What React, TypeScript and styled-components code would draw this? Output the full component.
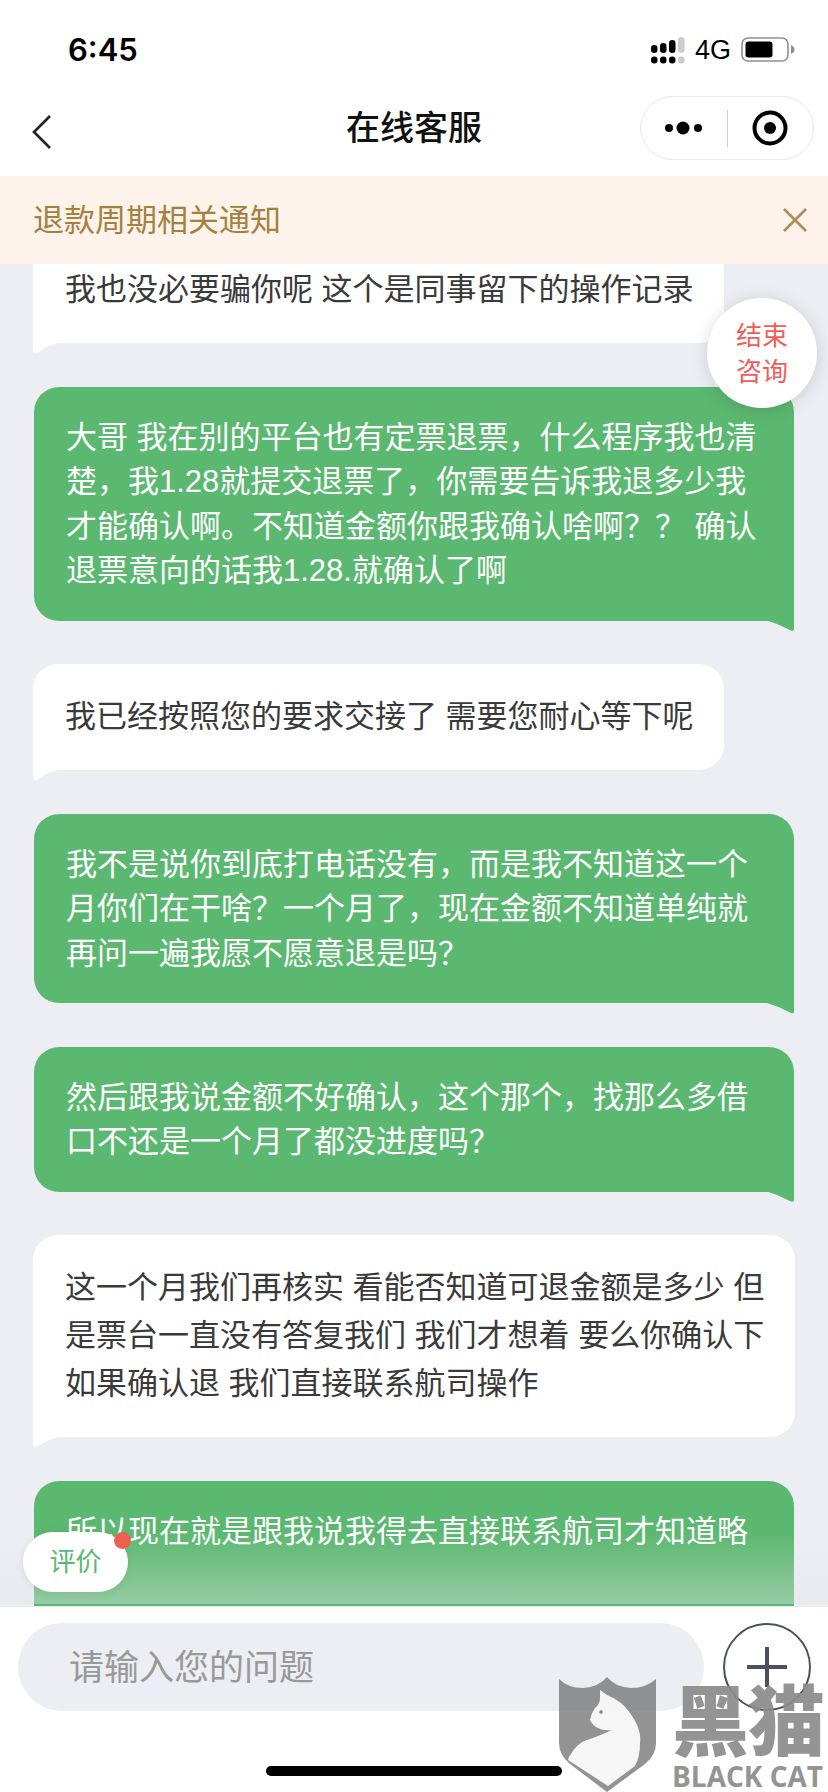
import React from "react";
import styled, { createGlobalStyle } from "styled-components";

const GlobalStyle = createGlobalStyle`
  html, body { margin: 0; padding: 0; background: #fff; }
  * { box-sizing: border-box; }
`;

const FONT = `"Liberation Sans", "Noto Sans CJK SC", sans-serif`;

const Page = styled.div`
  position: relative;
  width: 828px;
  height: 1792px;
  display: flex;
  flex-direction: column;
  overflow: hidden;
  background: #fff;
  font-family: ${FONT};
`;

const StatusBar = styled.div`
  height: 88px;
  flex: none;
  display: flex;
  align-items: flex-start;
  justify-content: space-between;
  padding: 32px 33px 0 68px;
`;

const Time = styled.div`
  font-family: Inter, "Liberation Sans", sans-serif;
  font-size: 31px;
  line-height: 36px;
  font-weight: 600;
  color: #000;
`;

const StatusIcons = styled.div`
  display: flex;
  align-items: center;
  gap: 10px;
  height: 36px;
`;

const NetworkLabel = styled.span`
  font-size: 27px;
  line-height: 30px;
  color: #000;
`;

const NavBar = styled.div`
  position: relative;
  height: 88px;
  flex: none;
  display: flex;
  align-items: center;
  justify-content: space-between;
  padding: 0 14px 0 32px;
`;

const Title = styled.h1`
  position: absolute;
  left: 0;
  right: 0;
  top: 16px;
  margin: 0;
  text-align: center;
  font-size: 34px;
  line-height: 48px;
  font-weight: 500;
  color: #111;
  pointer-events: none;
`;

const Capsule = styled.div`
  width: 174px;
  height: 64px;
  margin-bottom: 8px;
  border: 1px solid #e8e8e8;
  border-radius: 32px;
  display: flex;
  align-items: center;
`;

const CapsulePart = styled.div`
  flex: 1;
  display: flex;
  justify-content: center;
  align-items: center;
`;

const CapsuleDivider = styled.div`
  width: 1px;
  height: 37px;
  background: #cfcfcf;
`;

const Notice = styled.div`
  height: 88px;
  flex: none;
  display: flex;
  align-items: center;
  justify-content: space-between;
  padding: 0 20px 0 33px;
  background: #fdf3ea;
  color: #a5803f;
  font-size: 31px;
  z-index: 1;
`;

const NoticeText = styled.span`
  margin-bottom: 6px;
`;

const Chat = styled.div`
  position: relative;
  flex: 1;
  min-height: 0;
  overflow: hidden;
  background: #eceef4;
`;

const Messages = styled.div`
  display: flex;
  flex-direction: column;
  align-items: flex-start;
  gap: 43.5px;
  padding: 0 33px;
  margin-top: -27px;
`;

const Bubble = styled.div<{ $mine?: boolean; $cut?: boolean }>`
  position: relative;
  width: ${(p) => (p.$cut ? "760px" : "fit-content")};
  max-width: ${(p) => (p.$mine ? "760px" : "762px")};
  padding: ${(p) => (p.$mine ? "29px 32px 27px" : "29px 30px 29px 32px")};
  ${(p) => (p.$cut ? "padding-bottom: 120px;" : "")}
  font-size: 31px;
  line-height: ${(p) => (p.$mine ? "44.5px" : "48px")};
  color: ${(p) => (p.$mine ? "#fff" : "#3a3a3a")};
  background: ${(p) => (p.$mine ? "#5bb870" : "#fff")};
  border-radius: ${(p) => (p.$mine ? "25px 25px 0 25px" : "25px 25px 25px 0")};
  ${(p) => (p.$mine ? "margin-left: 1px;" : "")}

  &::after {
    content: "";
    position: absolute;
    bottom: -11px;
    width: 30px;
    height: 12px;
    background: inherit;
    ${(p) =>
      p.$mine
        ? `right: 0; clip-path: path("M0 0 L30 0 L30 10 Q30 12 27 11 Q14 4 0 0 Z");`
        : `left: 0; clip-path: path("M0 0 L30 0 Q16 2 4 11 Q0 12 0 9 Z");`}
  }
`;

const Fade = styled.div`
  position: absolute;
  left: 0;
  right: 0;
  bottom: 2px;
  height: 72px;
  background: linear-gradient(rgba(228, 229, 232, 0), rgba(228, 229, 232, 0.42));
  pointer-events: none;
`;

const EndButton = styled.div`
  position: absolute;
  top: 34px;
  left: 707px;
  width: 110px;
  height: 110px;
  padding-top: 2px;
  border-radius: 50%;
  background: #fff;
  box-shadow: 0 2px 18px rgba(0, 0, 0, 0.14);
  display: flex;
  align-items: center;
  justify-content: center;
  text-align: center;
  font-size: 26px;
  line-height: 36px;
  color: #f25c58;
`;

const RateButton = styled.div`
  position: absolute;
  left: 23px;
  bottom: 14px;
  width: 105px;
  height: 60px;
  padding-bottom: 5px;
  border-radius: 30px;
  background: #fff;
  box-shadow: 0 1px 8px rgba(0, 0, 0, 0.08);
  display: flex;
  align-items: center;
  justify-content: center;
  font-size: 26px;
  color: #5cb870;

  &::after {
    content: "";
    position: absolute;
    top: 0;
    right: -3px;
    width: 17px;
    height: 17px;
    border-radius: 50%;
    background: #ee5f52;
  }
`;

const InputBar = styled.div`
  height: 186px;
  flex: none;
  display: flex;
  align-items: flex-start;
  gap: 19px;
  padding: 16px 17px 0 18px;
  background: #fff;
  border-top: 1px solid #e9eaee;
`;

const InputBox = styled.div`
  width: 686px;
  height: 88px;
  padding: 0 0 6px 51px;
  display: flex;
  align-items: center;
  border-radius: 44px;
  background: #eceef4;
  font-size: 35px;
  color: #999;
`;

const AddButton = styled.div`
  width: 88px;
  height: 88px;
  flex: none;
  border-radius: 50%;
  border: 2px solid #4c525c;
  display: flex;
  align-items: center;
  justify-content: center;
`;

const HomeBar = styled.div`
  position: absolute;
  left: 266px;
  bottom: 16px;
  width: 296px;
  height: 10px;
  border-radius: 5px;
  background: #000;
`;

const Watermark = styled.div`
  position: absolute;
  left: 559px;
  top: 1677px;
  width: 269px;
  height: 115px;
  display: flex;
  gap: 16px;
  opacity: 0.92;
  pointer-events: none;
`;

const MarkText = styled.div`
  display: flex;
  flex-direction: column;
  color: #8b8b8c;
`;

const MarkName = styled.div`
  margin-top: -4px;
  font-family: "Noto Sans CJK SC", sans-serif;
  font-size: 77px;
  line-height: 88px;
  font-weight: 900;
  white-space: nowrap;
  letter-spacing: -1px;
`;

const MarkLatin = styled.div`
  margin-top: 1px;
  font-family: "Open Sans", "Liberation Sans", sans-serif;
  font-size: 28px;
  line-height: 28px;
  font-weight: 700;
  white-space: nowrap;
`;

function SignalIcon() {
  const lower = [0, 9, 18, 27];
  return (
    <svg width="34" height="27" viewBox="0 0 34 27">
      {lower.map((x, i) => (
        <rect key={x} x={x} y={19.5} width="6.5" height="7" rx="3.2" fill={i === 3 ? "#ccc" : "#000"} />
      ))}
      <rect x="0" y="8" width="6.5" height="8" rx="3.2" fill="#000" />
      <rect x="9" y="6" width="6.5" height="10" rx="3.2" fill="#000" />
      <rect x="18" y="3" width="6.5" height="13" rx="3.2" fill="#000" />
      <rect x="27" y="0" width="6.5" height="16" rx="3.2" fill="#ccc" />
    </svg>
  );
}

function BatteryIcon() {
  return (
    <svg width="54" height="26" viewBox="0 0 54 26">
      <rect x="1" y="1" width="46" height="23" rx="6" fill="none" stroke="#8e8e8e" strokeWidth="1.6" />
      <rect x="4.5" y="4.5" width="27" height="16" rx="3" fill="#000" />
      <path d="M50 8 C52.5 9 53.5 11 53.5 12.5 C53.5 14 52.5 16 50 17 Z" fill="#8e8e8e" />
    </svg>
  );
}

function ShieldMark() {
  return (
    <svg width="97" height="115" viewBox="0 0 97 115">
      <path
        d="M0 2 Q9 11 24 11 Q40 10 48 0 Q56 10 72 11 Q87 11 97 2 L97 66 Q97 78 86 87 L48 115 L11 87 Q0 78 0 66 Z"
        fill="#7d7d7e"
        opacity="0.9"
      />
      <path
        d="M41 13 L48 18 Q63 24 71 36 Q83 52 81 66 Q81 80 76 89 L49 109 L9 83 Q10 79 12 77 Q17 68 25 64 Q38 60 53 53 Q44 54 39 51 Q33 48 31 43 Q32 37 36 31 Q41 27 41 21 Z"
        fill="#f6f6f7"
      />
      <circle cx="42" cy="35" r="1.8" fill="#7d7d7e" />
    </svg>
  );
}

export default function App() {
  return (
    <Page>
      <GlobalStyle />
      <StatusBar>
        <Time>6:45</Time>
        <StatusIcons>
          <SignalIcon />
          <NetworkLabel>4G</NetworkLabel>
          <BatteryIcon />
        </StatusIcons>
      </StatusBar>

      <NavBar>
        <svg width="20" height="34" viewBox="0 0 20 34">
          <path d="M18 1 L2 17 L18 33" fill="none" stroke="#222" strokeWidth="2.6" />
        </svg>
        <Title>在线客服</Title>
        <Capsule>
          <CapsulePart>
            <svg width="38" height="14" viewBox="0 0 38 14">
              <circle cx="4" cy="7" r="4" fill="#000" />
              <circle cx="18" cy="7" r="6.5" fill="#000" />
              <circle cx="33" cy="7" r="4" fill="#000" />
            </svg>
          </CapsulePart>
          <CapsuleDivider />
          <CapsulePart>
            <svg width="36" height="36" viewBox="0 0 36 36">
              <circle cx="18" cy="18" r="15.5" fill="none" stroke="#000" strokeWidth="4" />
              <circle cx="18" cy="18" r="6" fill="#000" />
            </svg>
          </CapsulePart>
        </Capsule>
      </NavBar>

      <Notice>
        <NoticeText>退款周期相关通知</NoticeText>
        <svg width="26" height="26" viewBox="0 0 26 26">
          <path d="M2 2 L24 24 M24 2 L2 24" stroke="#ab8d5a" strokeWidth="2.6" />
        </svg>
      </Notice>

      <Chat>
        <Messages>
          <Bubble>我也没必要骗你呢 这个是同事留下的操作记录</Bubble>
          <Bubble $mine>
            大哥 我在别的平台也有定票退票，什么程序我也清楚，我1.28就提交退票了，你需要告诉我退多少我才能确认啊。不知道金额你跟我确认啥啊？？ 确认退票意向的话我1.28.就确认了啊
          </Bubble>
          <Bubble>我已经按照您的要求交接了 需要您耐心等下呢</Bubble>
          <Bubble $mine>
            我不是说你到底打电话没有，而是我不知道这一个月你们在干啥？一个月了，现在金额不知道单纯就再问一遍我愿不愿意退是吗？
          </Bubble>
          <Bubble $mine>然后跟我说金额不好确认，这个那个，找那么多借口不还是一个月了都没进度吗？</Bubble>
          <Bubble>
            这一个月我们再核实 看能否知道可退金额是多少 但是票台一直没有答复我们 我们才想着 要么你确认下如果确认退 我们直接联系航司操作
          </Bubble>
          <Bubble $mine $cut>
            所以现在就是跟我说我得去直接联系航司才知道略
          </Bubble>
        </Messages>
        <Fade />
        <EndButton>
          结束
          <br />
          咨询
        </EndButton>
        <RateButton>评价</RateButton>
      </Chat>

      <InputBar>
        <InputBox>请输入您的问题</InputBox>
        <AddButton>
          <svg width="40" height="40" viewBox="0 0 40 40">
            <path d="M20 1 V39 M1 20 H39" stroke="#4c525c" strokeWidth="4" strokeLinecap="round" />
          </svg>
        </AddButton>
      </InputBar>

      <HomeBar />
      <Watermark>
        <ShieldMark />
        <MarkText>
          <MarkName>黑猫</MarkName>
          <MarkLatin>BLACK CAT</MarkLatin>
        </MarkText>
      </Watermark>
    </Page>
  );
}
